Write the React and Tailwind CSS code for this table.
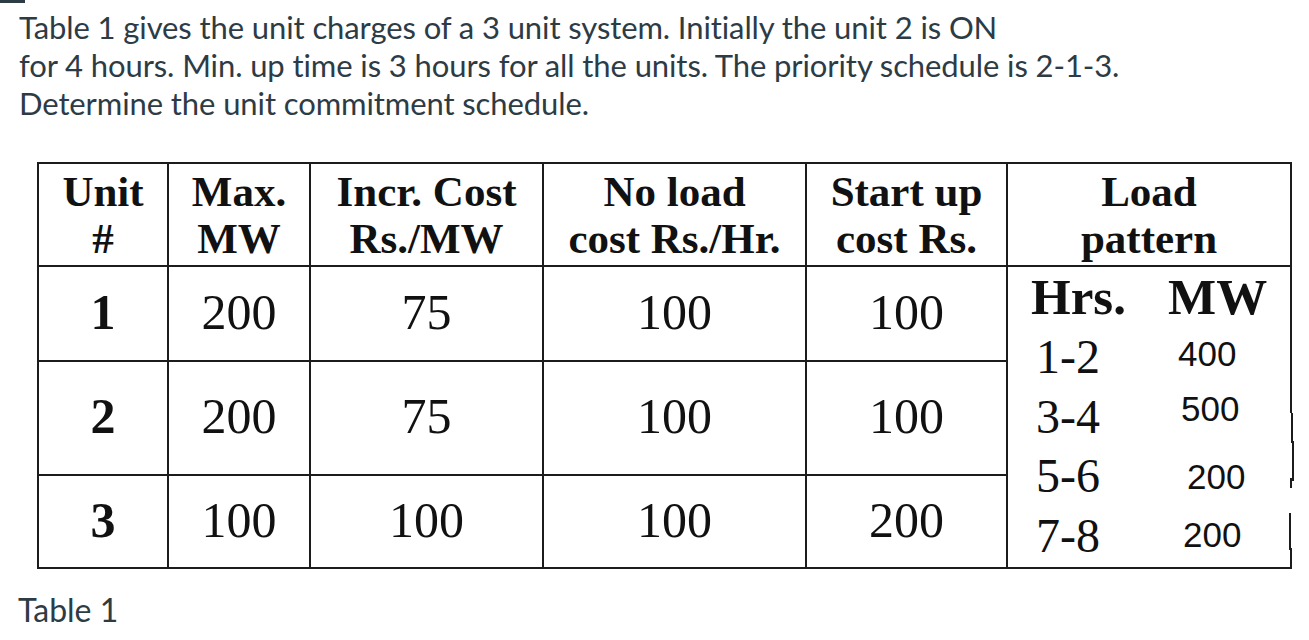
export default function App() {
  const serif = { fontFamily: '"Liberation Serif", "Times New Roman", serif' };
  const head = "font-bold text-[43px] leading-[47px] text-[#111]";
  const num = "text-[50px] leading-none text-[#111] pb-[4px]";
  const cell = "bg-white flex items-center justify-center text-center";
  const loadRows = [
    { h: "1-2", mw: "400", H: 61, w: 142, up: 7 },
    { h: "3-4", mw: "500", H: 59, w: 145, up: 12 },
    { h: "5-6", mw: "200", H: 60, w: 151, up: 3 },
    { h: "7-8", mw: "200", H: 60, w: 147, up: 5 },
  ];
  const data = [
    ["1", "200", "75", "100", "100"],
    ["2", "200", "75", "100", "100"],
    ["3", "100", "100", "100", "200"],
  ];
  return (
    <div className="w-[1309px] h-[640px] bg-white overflow-hidden relative">
      <div className="h-[3px] w-[25px] bg-[#2d3b45]" />
      <div
        className="pl-[19px] pt-[5px] text-[31px] tracking-[-0.1px] leading-[38px] text-[#2d3b45]"
        style={{ fontFamily: 'Lato, "Open Sans", sans-serif' }}
      >
        <p>Table 1 gives the unit charges of a 3 unit system. Initially the unit 2 is ON</p>
        <p>for 4 hours. Min. up time is 3 hours for all the units. The priority schedule is 2-1-3.</p>
        <p>Determine the unit commitment schedule.</p>
      </div>
      <div className="pl-[37px] pt-[40px]" style={serif}>
        <div className="grid w-fit bg-[#1c1c1c] gap-[2px] pl-[2px] pt-[2px] pb-[2px] grid-cols-[128px_140px_231px_261px_199px_284px] grid-rows-[101px_93px_112px_91px]">
          <div className={`${cell} ${head}`}>Unit<br />#</div>
          <div className={`${cell} ${head}`}>Max.<br />MW</div>
          <div className={`${cell} ${head}`}>Incr. Cost<br />Rs./MW</div>
          <div className={`${cell} ${head}`}>No load<br />cost Rs./Hr.</div>
          <div className={`${cell} ${head}`}>Start up<br />cost Rs.</div>
          <div className={`${cell} ${head} border-r-2 border-[#1c1c1c]`}>Load<br />pattern</div>
          {data.map((r, i) => (
            <>
              <div key={`a${i}`} className={`${cell} ${num} font-bold`}>{r[0]}</div>
              <div key={`b${i}`} className={`${cell} ${num}`}>{r[1]}</div>
              <div key={`c${i}`} className={`${cell} ${num}`}>{r[2]}</div>
              <div key={`d${i}`} className={`${cell} ${num}`}>{r[3]}</div>
              <div key={`e${i}`} className={`${cell} ${num}`}>{r[4]}</div>
              {i === 0 && (
                <div key="load" className="bg-white row-span-3 relative pt-[1px] text-[#111]">
                  <div className="flex items-baseline h-[58px] leading-[58px] pl-[23px] text-[51px] font-bold">
                    <span className="inline-block w-[137px]">Hrs.</span>
                    <span>MW</span>
                  </div>
                  {loadRows.map((lr) => (
                    <div
                      key={lr.h}
                      className="flex items-baseline pl-[28px]"
                      style={{ height: lr.H, lineHeight: `${lr.H}px` }}
                    >
                      <span className="inline-block text-[48px]" style={{ width: lr.w }}>{lr.h}</span>
                      <span
                        className="text-[35px]"
                        style={{ fontFamily: '"Liberation Sans", Arial, sans-serif', transform: `translateY(-${lr.up}px)` }}
                      >
                        {lr.mw}
                      </span>
                    </div>
                  ))}
                  <svg className="absolute -right-[4px] top-0 w-[8px] h-[300px]" viewBox="0 0 8 300">
                    <g stroke="#1c1c1c" strokeWidth="2" fill="none">
                      <path d="M3 0 V146" />
                      <path d="M4 146 V176" />
                      <path d="M5 174 V214" />
                      <path d="M3 211 V221" />
                      <path d="M2 246 V283" />
                      <path d="M3 281 V301" />
                    </g>
                  </svg>
                </div>
              )}
            </>
          ))}
        </div>
      </div>
      <div
        className="pl-[18px] pt-[22px] text-[32px] leading-[38px] text-[#2d3b45]"
        style={{ fontFamily: 'Lato, "Open Sans", sans-serif' }}
      >
        Table 1
      </div>
    </div>
  );
}
